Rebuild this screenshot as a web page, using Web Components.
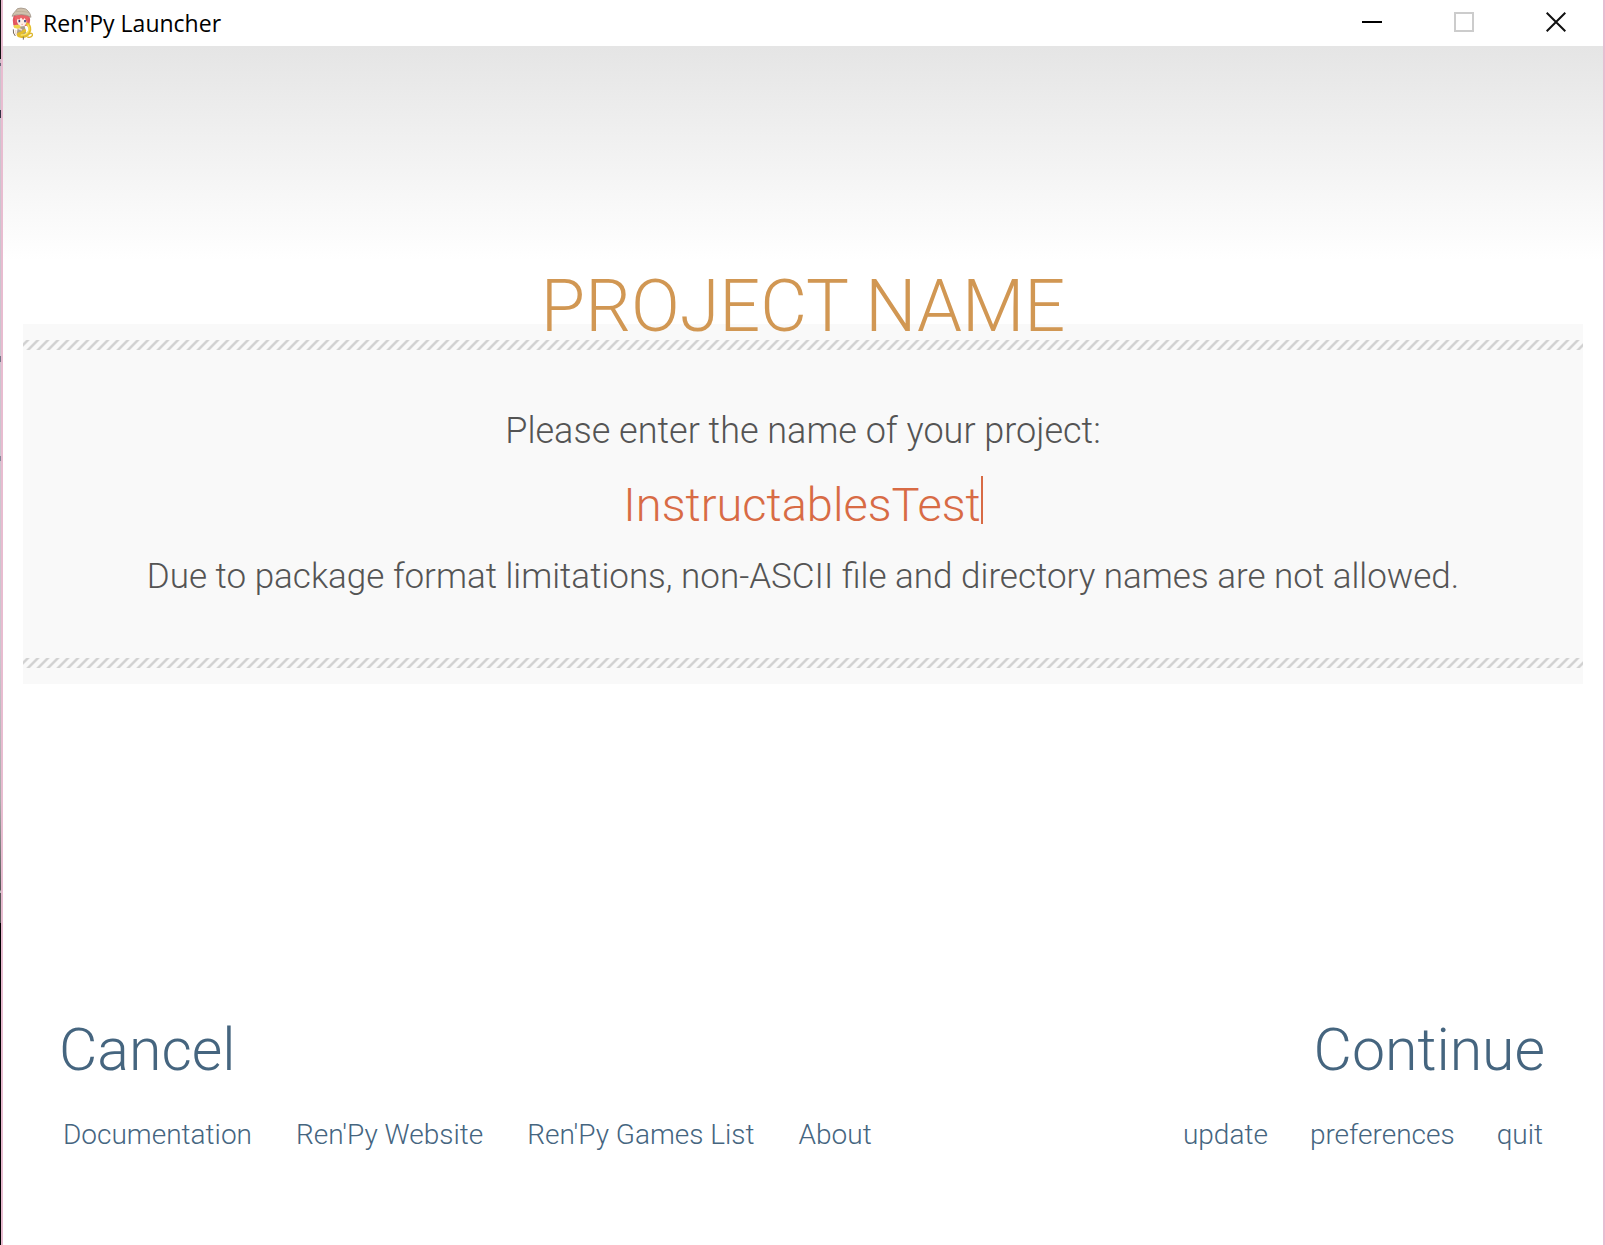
<!DOCTYPE html>
<html lang="en">
<head>
<meta charset="utf-8">
<title>Ren'Py Launcher</title>
<style>
html, body { margin: 0; height: 100%; }
body { font-family: Roboto, "Liberation Sans", sans-serif; font-weight: 300; color: #545454; }
</style>
</head>
<body>
<launcher-window>
  <title-bar slot="title">Ren'Py Launcher</title-bar>
  <project-prompt></project-prompt>
  <launcher-actions></launcher-actions>
  <launcher-footer></launcher-footer>
</launcher-window>
<script>
function define(name, markup) {
  customElements.define(name, class extends HTMLElement {
    constructor() {
      super();
      const t = document.createElement('template');
      t.innerHTML = markup;
      this.attachShadow({ mode: 'open' }).append(t.content.cloneNode(true));
    }
  });
}

define('stripe-rule', `
<style>
:host { display: block; height: 10px;
  background: linear-gradient(135deg, #f9f9f9 12%, #d0d0d0 21%, #d0d0d0 29%, #f9f9f9 38%, #f9f9f9 62%, #d0d0d0 71%, #d0d0d0 79%, #f9f9f9 88%) 0 0 / 10px 10px; }
</style>`);

define('title-bar', `
<style>
:host { display: flex; align-items: center; height: 46px; padding-right: 1px; background: #fff; color: #000;
  font: 400 23px/46px "Open Sans", "Noto Sans", sans-serif; }
.mascot { width: 24px; height: 34px; margin: 0 8px; flex: none; }
.label { flex: 1; }
button { width: 92px; height: 44px; border: 0; padding: 0; background: none; display: grid; place-items: center; align-self: flex-start; }
</style>
<svg class="mascot" viewBox="33 12 72 102" aria-hidden="true">
  <path d="M41 40 Q36 54 40 70 L50 74 L60 70 L78 72 L88 68 Q93 54 88 40Z" fill="#e05560"/>
  <path d="M50 46 Q48 64 60 72 L70 74 Q82 68 81 48Z" fill="#fdeee6"/>
  <path d="M44 44 L46 64 Q50 60 53 50 L58 54 L63 46 L69 54 L74 48 L82 64 L88 42 L64 36Z" fill="#ea6468"/>
  <path d="M58 54v7M75 54v7" stroke="#3c3f80" stroke-width="5"/>
  <path d="M64 67h5" stroke="#d88" stroke-width="2"/>
  <path d="M36 43 Q40 31 46 28 Q50 17 63 18 Q80 18 86 29 Q92 36 93 46 Q80 38 66 38 Q50 36 36 43Z" fill="#cfc1ad" stroke="#94877a" stroke-width="2"/>
  <path d="M46 29 Q64 26 86 31" fill="none" stroke="#b8a993" stroke-width="2"/>
  <path d="M54 74 L74 72 L80 100 L60 104 L50 96Z" fill="#a89c8d"/>
  <path d="M48 84 Q44 94 52 98 M52 78 L66 84" fill="none" stroke="#f4dccb" stroke-width="5"/>
  <path d="M40 72 Q46 66 58 69 L63 76 L54 80 L43 78Z" fill="#efd54e"/>
  <path d="M82 66 Q94 76 87 92 Q78 106 62 103 Q52 101 56 96 Q66 94 74 86" fill="none" stroke="#e4bd2c" stroke-width="9" stroke-linecap="round"/>
  <path d="M83 68 Q91 78 84 90 Q76 100 62 99" fill="none" stroke="#fbe463" stroke-width="4"/>
  <path d="M86 96 Q99 90 97 101 Q92 108 82 105" fill="none" stroke="#dcb62c" stroke-width="4"/>
  <path d="M40 82 Q38 94 46 102 M70 104v9" fill="none" stroke="#766b63" stroke-width="3"/>
</svg>
<span class="label"><slot></slot></span>
<button aria-label="Minimize"><svg width="20" height="20"><path d="M0 10h20" stroke="#000" stroke-width="2"/></svg></button>
<button aria-label="Maximize" disabled><svg width="20" height="20"><path d="M1 1h18v18H1z" fill="none" stroke="#ccc" stroke-width="2"/></svg></button>
<button aria-label="Close"><svg width="20" height="20"><path d="M.7.7l18.6 18.6M19.3.7L.7 19.3" stroke="#111" stroke-width="2"/></svg></button>`);

define('project-prompt', `
<style>
:host { display: flex; flex-direction: column; padding: 0 20px; text-align: center; }
h1 { margin: 0 0 -27px; font-weight: 300; font-size: 72px; line-height: 88px; color: #d19753; z-index: 1; }
.panel { background: #f9f9f9; padding: 16px 0; }
form { display: flex; flex-direction: column; align-items: center; padding: 60px 0; margin: 0; }
label { font-size: 36px; line-height: 42px; }
p { margin: 0; font-size: 35px; line-height: 42px; }
.field { display: flex; align-items: flex-start; height: 56px; margin: 24px 0; }
input { field-sizing: content; font: inherit; font-size: 47px; line-height: 58px; height: 58px;
  color: #d86b45; border: 0; padding: 0; margin: 0; background: none; outline: 0; }
.caret { width: 2px; height: 48px; background: #d86b45; }
</style>
<h1>PROJECT NAME</h1>
<div class="panel">
  <stripe-rule></stripe-rule>
  <form>
    <label for="name">Please enter the name of your project:</label>
    <div class="field"><input id="name" type="text" value="InstructablesTest" spellcheck="false"><span class="caret"></span></div>
    <p>Due to package format limitations, non-ASCII file and directory names are not allowed.</p>
  </form>
  <stripe-rule></stripe-rule>
</div>`);

define('launcher-actions', `
<style>
:host { display: flex; justify-content: space-between; margin-top: auto; padding: 0 58px 0 56px; }
button { font: inherit; font-size: 59px; line-height: 70px; color: #45657f; background: none; border: 0; padding: 0; }
</style>
<button>Cancel</button><button>Continue</button>`);

define('launcher-footer', `
<style>
:host { display: flex; justify-content: space-between; padding: 33px 60px 93px; }
nav { display: flex; gap: 44px; }
nav:last-child { gap: 42px; }
a { font-size: 28px; line-height: 34px; color: #45657f; text-decoration: none; }
</style>
<nav aria-label="Resources"><a href="#docs">Documentation</a><a href="#site">Ren'Py Website</a><a href="#games">Ren'Py Games List</a><a href="#about">About</a></nav>
<nav aria-label="Launcher"><a href="#update">update</a><a href="#preferences">preferences</a><a href="#quit">quit</a></nav>`);

define('launcher-window', `
<style>
:host { display: flex; min-height: 100vh; }
.edge { width: 1px; background: linear-gradient(#111 0 59px, #c9bcc6 59px 63px, #667 63px 66px, #c9c4cc 66px 110px, #334 110px 118px, #cbc5ce 118px 356px, #778 356px 362px, #cbc5ce 362px 456px, #889 456px 461px, #ccc6ce 461px 650px, #aaa 800px, #555 890px, #bbb 891px 893px, #555 893px 923px, #000 923px); }
.frame { flex: 1; display: flex; flex-direction: column; border: solid #e8bcd0; border-width: 0 2px; background: #fff; }
main { flex: 1; display: flex; flex-direction: column; padding-top: 217px;
  background: linear-gradient(#e5e5e5, #e6e6e6 10px, #fff 215px) no-repeat; }
</style>
<div class="edge"></div>
<div class="frame"><slot name="title"></slot><main><slot></slot></main></div>`);
</script>
</body>
</html>
